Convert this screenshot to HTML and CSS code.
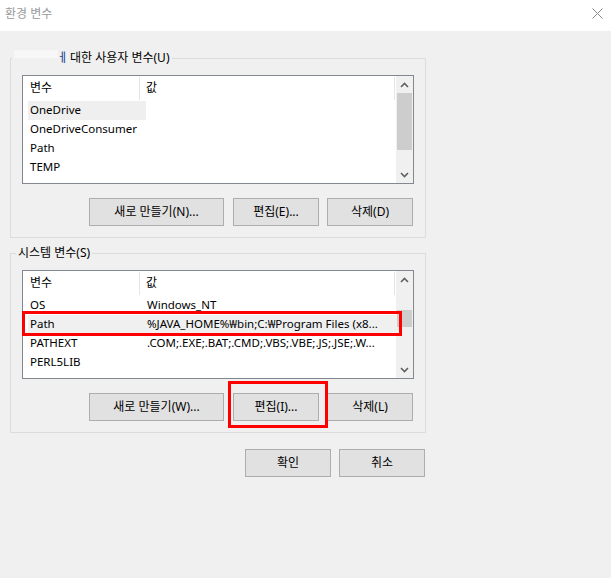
FILE: index.html
```html
<!DOCTYPE html>
<html lang="ko">
<head>
    <meta charset="UTF-8">
    <meta name="viewport" content="width=device-width, initial-scale=1.0">
    <title>환경 변수</title>
    <link rel="stylesheet" href="styles.css">
</head>
<body>
    <div class="window">
        <!-- Title bar -->
        <div class="titlebar">
            <span class="title">환경 변수</span>
            <svg class="close" width="11" height="11" viewBox="0 0 11 11">
                <path d="M0.5 0.5 L10.5 10.5 M10.5 0.5 L0.5 10.5" stroke="#8a8a8a" stroke-width="1" fill="none"/>
            </svg>
        </div>

        <div class="content">
            <!-- User variables -->
            <fieldset class="group">
                <legend class="legend-user"><span class="erased"></span><span class="jamo">ㅔ</span><span>대한 사용자 변수(U)</span></legend>
                <div class="list">
                    <div class="list-view">
                        <div class="list-head">
                            <div class="head-name">변수</div>
                            <div class="head-value">값</div>
                        </div>
                        <div class="row"><span class="name hot">OneDrive</span><span class="value"></span></div>
                        <div class="row"><span class="name">OneDriveConsumer</span><span class="value"></span></div>
                        <div class="row"><span class="name">Path</span><span class="value"></span></div>
                        <div class="row"><span class="name">TEMP</span><span class="value"></span></div>
                    </div>
                    <div class="scrollbar">
                        <div class="arrow">
                            <svg width="9" height="6" viewBox="0 0 9 6"><path d="M1 5 L4.5 1.5 L8 5" stroke="#606060" stroke-width="1.6" fill="none"/></svg>
                        </div>
                        <div class="track"><div class="thumb thumb-user"></div></div>
                        <div class="arrow">
                            <svg width="9" height="6" viewBox="0 0 9 6"><path d="M1 1 L4.5 4.5 L8 1" stroke="#606060" stroke-width="1.6" fill="none"/></svg>
                        </div>
                    </div>
                </div>
                <div class="buttons">
                    <button class="btn btn-wide">새로 만들기(N)...</button>
                    <button class="btn">편집(E)...</button>
                    <button class="btn">삭제(D)</button>
                </div>
            </fieldset>

            <!-- System variables -->
            <fieldset class="group group-system">
                <legend class="legend-system">시스템 변수(S)</legend>
                <div class="list">
                    <div class="list-view">
                        <div class="list-head">
                            <div class="head-name">변수</div>
                            <div class="head-value">값</div>
                        </div>
                        <div class="row"><span class="name">OS</span><span class="value">Windows_NT</span></div>
                        <div class="row selected"><span class="name">Path</span><span class="value">%JAVA_HOME%₩bin;C:₩Program Files (x8...</span></div>
                        <div class="row"><span class="name">PATHEXT</span><span class="value">.COM;.EXE;.BAT;.CMD;.VBS;.VBE;.JS;.JSE;.W...</span></div>
                        <div class="row"><span class="name">PERL5LIB</span><span class="value"></span></div>
                    </div>
                    <div class="scrollbar">
                        <div class="arrow">
                            <svg width="9" height="6" viewBox="0 0 9 6"><path d="M1 5 L4.5 1.5 L8 5" stroke="#606060" stroke-width="1.6" fill="none"/></svg>
                        </div>
                        <div class="track"><div class="thumb thumb-system"></div></div>
                        <div class="arrow">
                            <svg width="9" height="6" viewBox="0 0 9 6"><path d="M1 1 L4.5 4.5 L8 1" stroke="#606060" stroke-width="1.6" fill="none"/></svg>
                        </div>
                    </div>
                    <span class="mark mark-row"></span>
                </div>
                <div class="buttons">
                    <button class="btn btn-wide">새로 만들기(W)...</button>
                    <button class="btn">편집(I)...</button>
                    <button class="btn">삭제(L)</button>
                    <span class="mark mark-button"></span>
                </div>
            </fieldset>

            <!-- Dialog buttons -->
            <div class="dialog-buttons">
                <button class="btn">확인</button>
                <button class="btn">취소</button>
            </div>
        </div>
    </div>
</body>
</html>
```

FILE: styles.css
```css
/* Global Styles */
* {
    margin: 0;
    padding: 0;
    box-sizing: border-box;
}

body {
    font-family: 'Noto Sans', 'Noto Sans CJK KR', sans-serif;
    font-size: 12px;
    line-height: 16px;
    color: #000;
    background-color: #f0f0f0;
}

.window {
    width: 611px;
    height: 578px;
    background-color: #f0f0f0;
}

/* Title bar */
.titlebar {
    height: 31px;
    background-color: #fff;
    display: flex;
    align-items: center;
    justify-content: space-between;
    padding: 0 8px 4px 5px;
}

.title {
    color: #9a9a9a;
}

.close {
    display: block;
}

/* Main area */
.content {
    padding: 19px 0 0 10px;
    width: 426px;
}

.group {
    border: 1px solid #dcdcdc;
    padding: 9px 11px 11px 11px;
    min-width: 0;
}

.group legend {
    height: 16px;
    line-height: 16px;
    padding: 0 2px;
    white-space: nowrap;
}

.legend-user {
    display: flex;
    margin-left: -10px;
}

.legend-system {
    margin-left: -6px;
}

.group-system {
    margin-top: 7px;
}

/* username blanked out of the legend */
.erased {
    width: 44px;
    height: 8px;
    background-color: #f7f7f7;
}

.jamo {
    width: 12px;
    text-indent: -1px;
    overflow: hidden;
    color: #1b3a8c;
}

/* List views */
.list {
    position: relative;
    display: flex;
    height: 109px;
    border: 1px solid #828790;
    background-color: #fff;
}

.list-view {
    flex: 1;
    overflow: hidden;
}

.list-head {
    display: flex;
    height: 25px;
    align-items: flex-start;
    padding-top: 1px;
}

.head-name {
    width: 117px;
    padding-left: 7px;
    border-right: 1px solid #e5e5e5;
    height: 23px;
    line-height: 22px;
}

.head-value {
    flex: 1;
    padding-left: 6px;
    border-right: 1px solid #e5e5e5;
    margin-right: 1px;
    height: 23px;
    line-height: 22px;
}

.row {
    display: flex;
    height: 19px;
    line-height: 18px;
    margin-left: 5px;
    font-size: 11.5px;
    white-space: nowrap;
}

.row .name {
    width: 118px;
    padding-left: 2px;
}

.row .value {
    flex: 1;
    padding-left: 1px;
    overflow: hidden;
}

.name.hot {
    background-color: #efefef;
}

.row.selected {
    background-color: #f0f0f0;
}

/* Scroll bars */
.scrollbar {
    width: 17px;
    display: flex;
    flex-direction: column;
    background-color: #f0f0f0;
}

.arrow {
    height: 17px;
    display: flex;
    align-items: center;
    justify-content: center;
}

.arrow svg {
    display: block;
}

.track {
    flex: 1;
}

.thumb {
    margin: 0 1px;
    background-color: #cdcdcd;
}

.thumb-user {
    height: 57px;
}

.thumb-system {
    margin-top: 22px;
    height: 17px;
}

/* Buttons */
.buttons {
    position: relative;
    display: flex;
    justify-content: flex-end;
    margin-top: 14px;
    padding-right: 1px;
}

.btn {
    width: 86px;
    height: 28px;
    font-family: inherit;
    font-size: 12px;
    line-height: 16px;
    color: #000;
    background-color: #e1e1e1;
    border: 1px solid #adadad;
}

.btn + .btn {
    margin-left: 8px;
}

.btn-wide {
    width: 135px;
    margin-right: 1px;
}

.dialog-buttons {
    display: flex;
    justify-content: flex-end;
    margin-top: 16px;
    padding-right: 1px;
}

/* Red highlight boxes */
.mark {
    position: absolute;
    border: 3px solid #f00;
    pointer-events: none;
}

.mark-row {
    left: -1px;
    top: 40px;
    width: 380px;
    height: 25px;
}

.mark-button {
    left: 206px;
    top: -12px;
    width: 100px;
    height: 47px;
}
```
